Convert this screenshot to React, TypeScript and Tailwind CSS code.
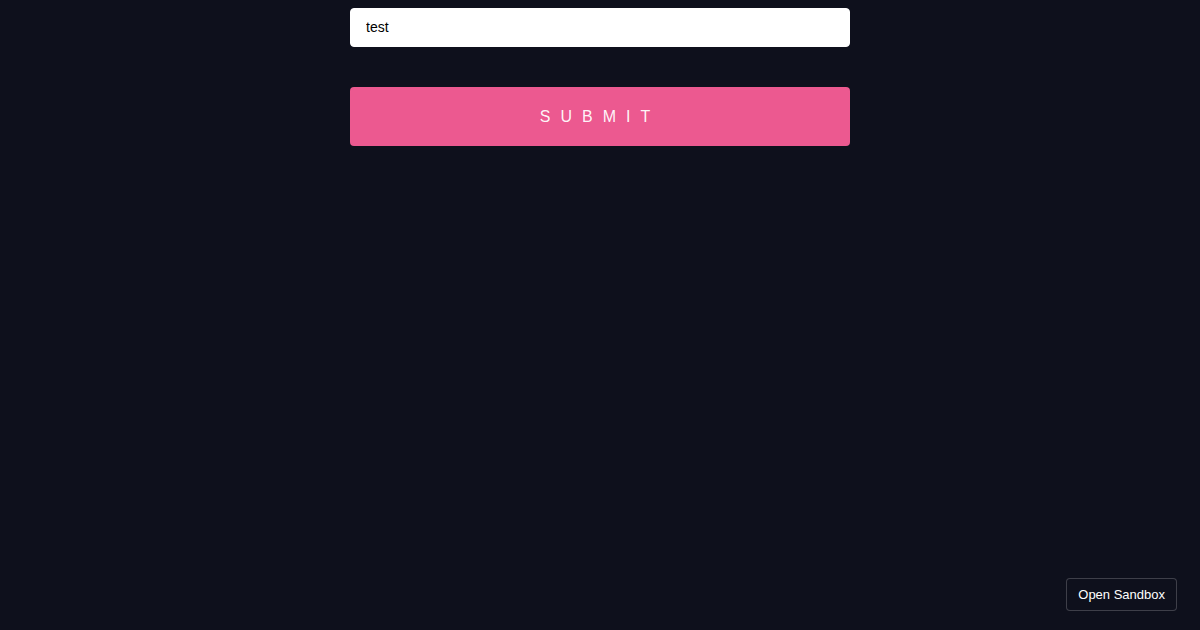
export default function App() {
  return (
    <div className="relative h-[630px] w-full overflow-hidden bg-[#0e101c] font-['Liberation_Sans',Arial,sans-serif]">
      <form className="mx-auto flex w-[500px] flex-col pt-2" onSubmit={(e) => e.preventDefault()}>
        <input
          defaultValue="test"
          className="block w-full rounded-[4px] border border-white bg-white px-[15px] py-[10px] text-[14px] leading-[17px] text-black outline-none"
        />
        <button
          type="submit"
          className="mt-10 rounded-[4px] bg-[#ec5990] p-5 text-[16px] leading-[19px] font-thin uppercase tracking-[10px] text-white/95"
        >
          Submit
        </button>
      </form>
      <button className="absolute right-[23px] bottom-[19px] h-[33px] rounded-[4px] border border-white/20 bg-[#0e101c] px-[11px] text-[13px] text-white">
        Open Sandbox
      </button>
    </div>
  );
}
